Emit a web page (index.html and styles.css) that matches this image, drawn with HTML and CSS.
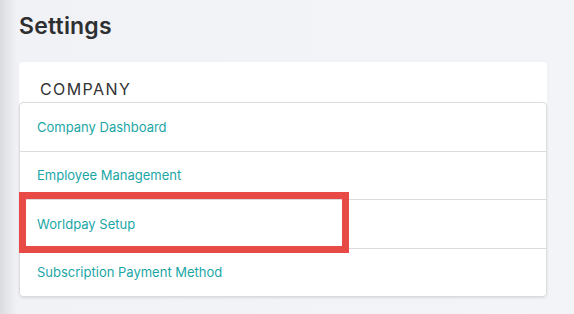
FILE: index.html
```html
<!DOCTYPE html>
<html lang="en">
<head>
    <meta charset="UTF-8">
    <meta name="viewport" content="width=device-width, initial-scale=1.0">
    <title>Settings</title>
    <link rel="stylesheet" href="styles.css">
</head>
<body>
    <main class="content">
        <h1 class="page-title">Settings</h1>

        <div class="settings-card">
            <div class="card-header">Company</div>
            <ul class="link-list">
                <li class="link-item"><a href="#">Company Dashboard</a></li>
                <li class="link-item"><a href="#">Employee Management</a></li>
                <li class="link-item"><a href="#">Worldpay Setup</a></li>
                <li class="link-item"><a href="#">Subscription Payment Method</a></li>
                <!-- annotation box drawn over the third row -->
                <div class="highlight-box"></div>
            </ul>
        </div>
    </main>
</body>
</html>
```

FILE: styles.css
```css
body {
    margin: 0;
    min-height: 100vh;
    font-family: 'Inter', 'Liberation Sans', sans-serif;
    background: linear-gradient(to right, #d9dbdf 0, #e6e7eb 8px, #f1f2f6 17px, #f3f4f8 100%);
    color: #2f3033;
}

.content {
    padding: 11px 27px 0 19px;
}

.page-title {
    margin: 0;
    font-size: 23px;
    line-height: 30px;
    font-weight: 600;
    letter-spacing: 0.2px;
    color: #2e2f31;
}

.settings-card {
    margin-top: 21px;
    background: #fff;
    border-radius: 4px;
    box-shadow: 0 1px 3px rgba(0, 0, 0, 0.04);
}

.card-header {
    height: 40px;
    box-sizing: border-box;
    padding: 17px 0 0 21px;
    font-size: 16px;
    line-height: 20px;
    letter-spacing: 1.4px;
    text-transform: uppercase;
    color: #333;
}

.link-list {
    position: relative;
    list-style: none;
    margin: 0;
    padding: 0;
    border: 1px solid #dcdcdc;
    border-radius: 4px;
    box-shadow: 0 1px 2px rgba(0, 0, 0, 0.08);
}

.link-item {
    display: flex;
    align-items: center;
    height: 47.5px;
    padding-left: 17px;
    border-top: 1px solid #dcdcdc;
}

.link-item:first-child {
    border-top: none;
}

.link-item a {
    font-size: 13px;
    color: #1ba6a6;
    text-decoration: none;
}

.highlight-box {
    position: absolute;
    top: 89px;
    left: -1px;
    width: 330px;
    height: 61px;
    box-sizing: border-box;
    border: 7px solid #e84a45;
}
```
